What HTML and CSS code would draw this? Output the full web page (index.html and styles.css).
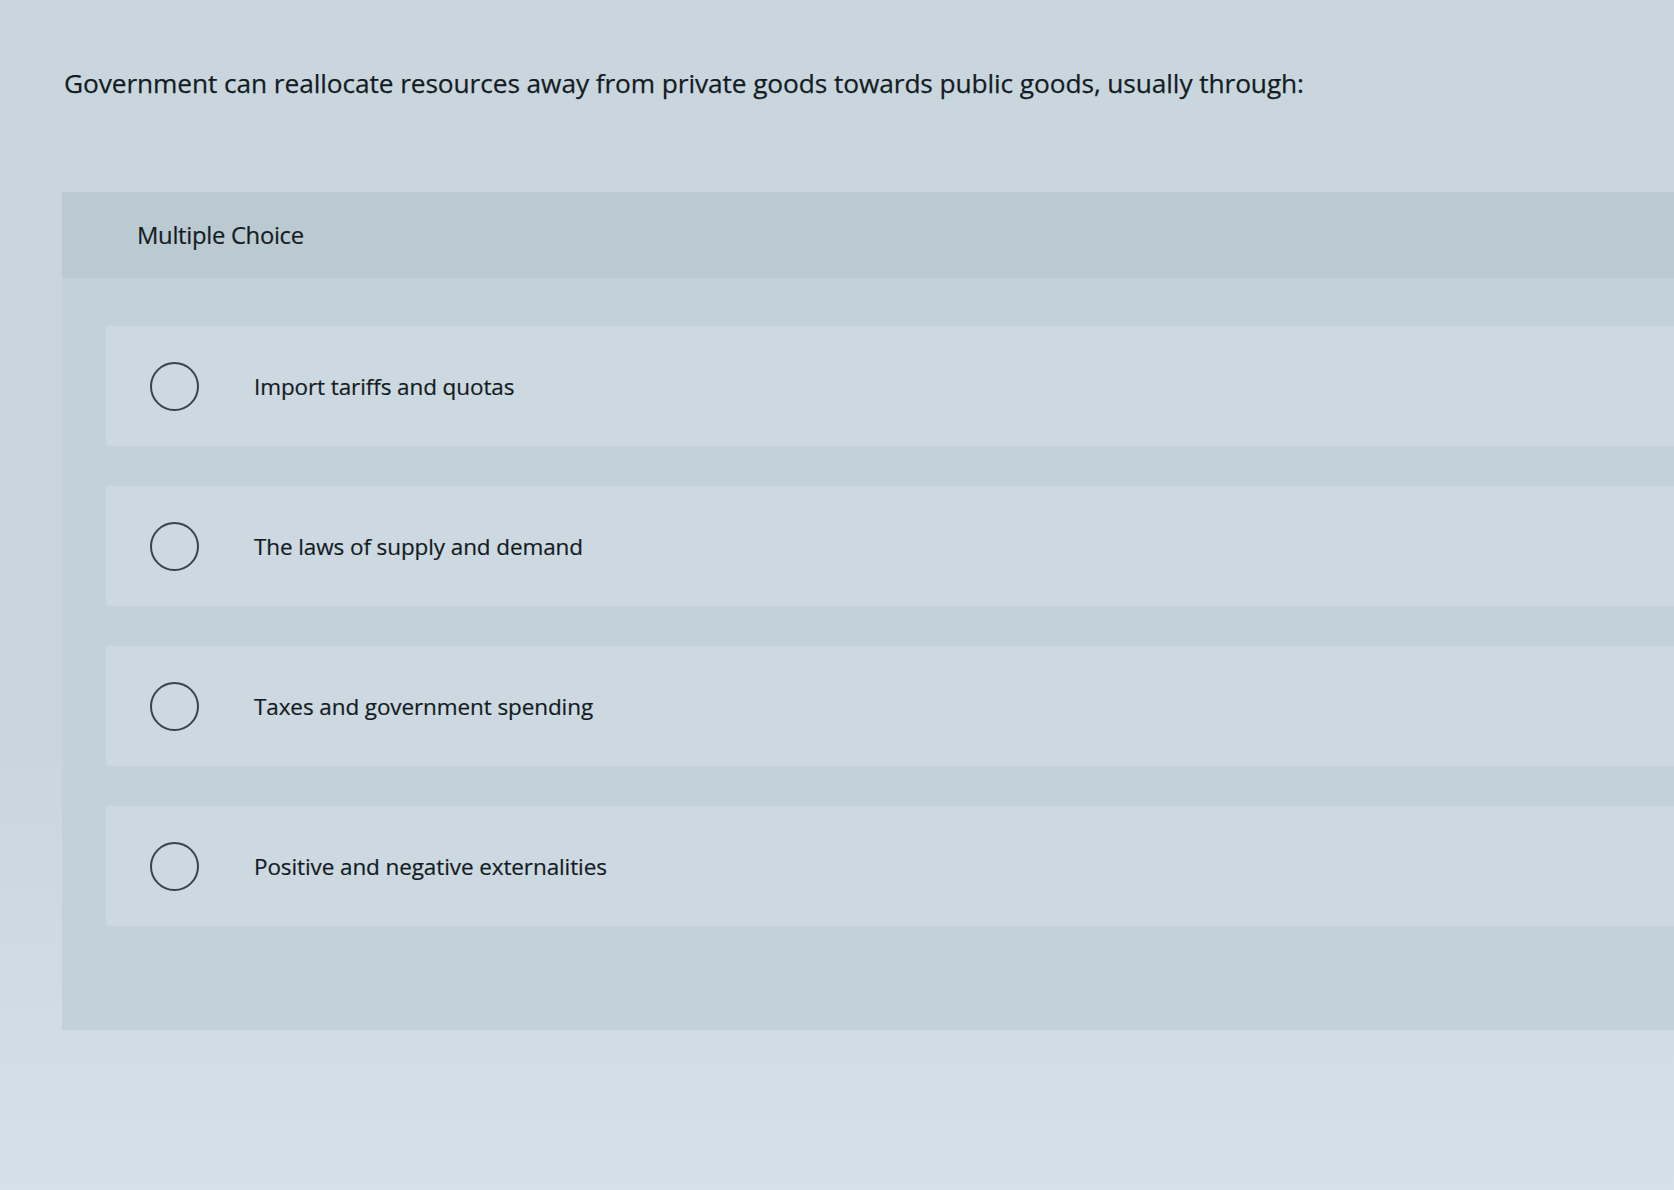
FILE: index.html
```html
<!DOCTYPE html>
<html lang="en">
<head>
<meta charset="utf-8">
<title>Multiple Choice</title>
<link rel="stylesheet" href="styles.css">
</head>
<body>
<div class="page">
  <p class="question">Government can reallocate resources away from private goods towards public goods, usually through:</p>
  <section class="panel">
    <header class="panel-head">Multiple Choice</header>
    <div class="options">
      <label class="option"><span class="radio"></span><span class="label">Import tariffs and quotas</span></label>
      <label class="option"><span class="radio"></span><span class="label">The laws of supply and demand</span></label>
      <label class="option"><span class="radio"></span><span class="label">Taxes and government spending</span></label>
      <label class="option"><span class="radio"></span><span class="label">Positive and negative externalities</span></label>
    </div>
  </section>
</div>
</body>
</html>
```
FILE: styles.css
```css
html, body {
  margin: 0;
  padding: 0;
}
body {
  width: 1674px;
  height: 1190px;
  overflow: hidden;
  background: linear-gradient(180deg, #c9d6dd 0%, #c8d5dc 60%, #d4e1e9 100%);
  font-family: "Open Sans", "Lato", "Liberation Sans", sans-serif;
  color: #141c23;
}
.page {
  padding: 66px 0 0 62px;
}
.question {
  margin: 0 0 0 2px;
  font-size: 26.3px;
  line-height: 34px;
  letter-spacing: -0.1px;
  -webkit-text-stroke: 0.25px #141c23;
}
.panel {
  margin-top: 92px;
  background: #c3d1d9;
  padding-bottom: 104px;
}
.panel-head {
  height: 86px;
  background: #bbc9d1;
  display: flex;
  align-items: center;
  padding-left: 75px;
  font-size: 23.8px;
  letter-spacing: -0.3px;
  -webkit-text-stroke: 0.2px #141c23;
}
.options {
  display: flex;
  flex-direction: column;
  gap: 40px;
  padding: 48px 0 0 44px;
}
.option {
  height: 120px;
  background: #ccd9e0;
  display: flex;
  align-items: center;
  padding-left: 44px;
}
.radio {
  width: 45px;
  height: 45px;
  border: 2px solid #37434f;
  border-radius: 50%;
  flex: none;
}
.label {
  margin-left: 55px;
  font-size: 22.5px;
  letter-spacing: -0.1px;
  -webkit-text-stroke: 0.2px #141c23;
}
```
